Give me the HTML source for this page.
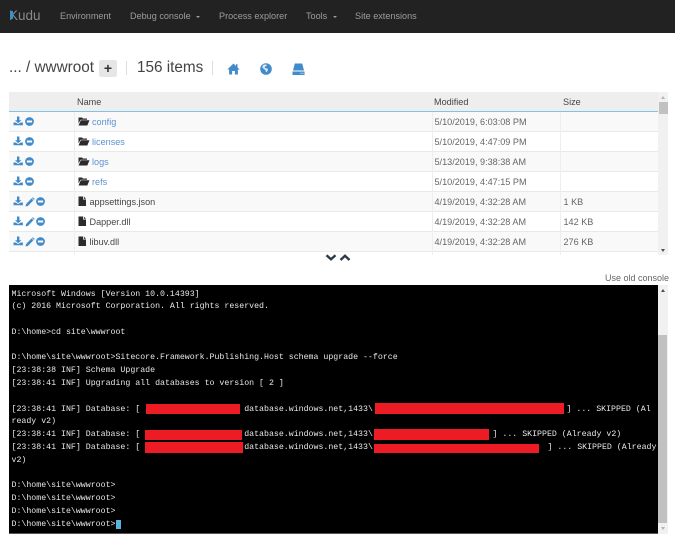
<!DOCTYPE html>
<html><head><meta charset="utf-8"><style>
*{box-sizing:border-box}
html,body{margin:0;padding:0;width:675px;height:542px;overflow:hidden;background:#fff;font-family:"Liberation Sans",sans-serif}
#w{position:absolute;left:0;top:0;width:675px;height:542px;overflow:hidden;filter:blur(.3px)}
.a{position:absolute;white-space:nowrap}
.nav{left:0;top:0;width:675px;height:33px;background:#222}
.n{top:11px;font-size:9.1px;line-height:11px;color:#9d9d9d}
.car{display:inline-block;width:0;height:0;border-left:2.5px solid transparent;border-right:2.5px solid transparent;border-top:2.5px solid #9d9d9d;margin-left:3px;vertical-align:1.5px}
.h{font-size:15.3px;line-height:18px;color:#444;top:59px}
.sep{width:1px;height:14px;background:#ddd;top:61px}
.row{left:9px;width:649px;height:20px;border-bottom:1.5px solid #e9e9e9}
.row.o{background:#f9f9f9}
.v{top:0;width:1px;height:20px;background:#eee}
.t{font-size:9.1px;line-height:12px;color:#444}
.m{color:#666}
.l{color:#5b93cf}
.c{left:11.5px;top:288.5px;font-family:"Liberation Mono",monospace;font-size:8.25px;line-height:12.8px;color:#e8e8e8;white-space:pre;font-weight:400}
.p{position:absolute}
.r{background:#ed1c24}
svg{position:absolute;display:block}
</style></head><body>
<svg width="0" height="0" style="position:absolute"><defs>
<g id="dl"><path d="M4 0.5h2.4v3.7h2L5.2 7.2 2 4.2h2z" fill="#428bca"/><path d="M0.5 6.5h2.2l2.5 1.6 2.5-1.6h2.2v2.8h-9.4z" fill="#428bca"/></g>
<g id="rm"><circle cx="4.5" cy="4.5" r="4.4" fill="#428bca"/><rect x="1.9" y="3.5" width="5.2" height="2" fill="#fff"/></g>
<g id="ed"><path d="M0.5 9.5l0.6-2.5 5.4-5.6 1.9 1.9-5.4 5.6zM7 0.9l0.8-0.7 1.9 1.9-0.8 0.8z" fill="#428bca"/></g>
<g id="fo"><path d="M0.5 0.5h3.5l1 1h4v1.200H2.500L0.500 6.500z" fill="#2b2b2b"/><path d="M2.800 3.300h8.700L9.300 8.500H0.500z" fill="#2b2b2b"/></g>
<g id="fi"><path d="M0.500 0.500h4.500v3h3v6.500h-7.500z" fill="#2b2b2b"/><path d="M5.800 0.500l2.200 2.300h-2.200z" fill="#2b2b2b"/></g>
</defs></svg>
<div id="w">
<div class="a nav"></div>
<div class="a" style="left:9px;top:8px;font-size:13.500px;line-height:16px;color:#8a8a8a;font-weight:300">Kudu</div>
<div class="a" style="left:9.500px;top:11px;width:3px;height:8px;background:#2f93d0"></div>
<div class="a n" style="left:60px">Environment</div>
<div class="a n" style="left:130px">Debug console <span class="car"></span></div>
<div class="a n" style="left:219px">Process explorer</div>
<div class="a n" style="left:306px">Tools <span class="car"></span></div>
<div class="a n" style="left:355px">Site extensions</div>

<div class="a h" style="left:9px">... / wwwroot</div>
<div class="a" style="left:99px;top:60px;width:18px;height:17px;background:#e6e6e6;border-radius:2px;color:#333;font-weight:700;font-size:14px;line-height:16px;text-align:center">+</div>
<div class="a sep" style="left:126px"></div>
<div class="a h" style="left:137px">156 items</div>
<div class="a sep" style="left:212px"></div>
<svg style="left:227px;top:63px" width="13" height="12" viewBox="0 0 13 12"><path d="M6.500 0.500L0.300 6.500h1.800V11.500h3V8h2.800v3.500h3V6.500h1.800L10.500 4.400V1.200H9v1.800z" fill="#428bca"/></svg>
<svg style="left:259.500px;top:63px" width="12" height="12" viewBox="0 0 12 12"><circle cx="6" cy="6" r="5.800" fill="#428bca"/><path d="M3.500 1.800c1.500-.6 3-.3 3.500.3-.4 1-2 1-2.200 2-.2 1 1.200 1.200 2.300 1.400 1 .3 1.200 1.200.5 2-.5.8-.6 1.500-1.400 1.700-.6-.8-.3-1.800-1.200-2.500C4.500 6 3 5.500 2.300 4.500c.2-1.200.5-2.100 1.200-2.700z" fill="#dcebf7"/></svg>
<svg style="left:292px;top:62.500px" width="13" height="13" viewBox="0 0 13 13"><path d="M2.800 0.500h7.400L12 7.500H1z" fill="#428bca"/><rect x="0.500" y="8.500" width="12" height="3.500" fill="#428bca"/><rect x="8.500" y="9.800" width="1" height="1" fill="#fff"/><rect x="10.500" y="9.800" width="1" height="1" fill="#fff"/></svg>

<div class="a" style="left:9px;top:92px;width:649px;height:20px;background:#eee;border-bottom:1.500px solid #7fc4e6"></div>
<div class="a t" style="left:77px;top:96px">Name</div>
<div class="a t" style="left:434px;top:96px">Modified</div>
<div class="a t" style="left:563px;top:96px">Size</div>

<div class="a row o" style="top:112px"></div>
<div class="a row" style="top:132px"></div>
<div class="a row o" style="top:152px"></div>
<div class="a row" style="top:172px"></div>
<div class="a row o" style="top:192px"></div>
<div class="a row" style="top:212px"></div>
<div class="a row o" style="top:232px"></div>

<div class="a v" style="left:74px;top:112px;height:143px;background:#eee"></div>
<div class="a v" style="left:431.500px;top:112px;height:143px;background:#eee"></div>
<div class="a v" style="left:560px;top:112px;height:143px;background:#eee"></div>

<svg style="left:13px;top:116px" width="10" height="10" viewBox="0 0 10 10"><use href="#dl"/></svg>
<svg style="left:25px;top:117px" width="9" height="9" viewBox="0 0 9 9"><use href="#rm"/></svg>
<svg style="left:13px;top:136px" width="10" height="10" viewBox="0 0 10 10"><use href="#dl"/></svg>
<svg style="left:25px;top:137px" width="9" height="9" viewBox="0 0 9 9"><use href="#rm"/></svg>
<svg style="left:13px;top:156px" width="10" height="10" viewBox="0 0 10 10"><use href="#dl"/></svg>
<svg style="left:25px;top:157px" width="9" height="9" viewBox="0 0 9 9"><use href="#rm"/></svg>
<svg style="left:13px;top:176px" width="10" height="10" viewBox="0 0 10 10"><use href="#dl"/></svg>
<svg style="left:25px;top:177px" width="9" height="9" viewBox="0 0 9 9"><use href="#rm"/></svg>
<svg style="left:13px;top:196px" width="10" height="10" viewBox="0 0 10 10"><use href="#dl"/></svg>
<svg style="left:24.500px;top:196.500px" width="10" height="10" viewBox="0 0 10 10"><use href="#ed"/></svg>
<svg style="left:36px;top:197px" width="9" height="9" viewBox="0 0 9 9"><use href="#rm"/></svg>
<svg style="left:13px;top:216px" width="10" height="10" viewBox="0 0 10 10"><use href="#dl"/></svg>
<svg style="left:24.500px;top:216.500px" width="10" height="10" viewBox="0 0 10 10"><use href="#ed"/></svg>
<svg style="left:36px;top:217px" width="9" height="9" viewBox="0 0 9 9"><use href="#rm"/></svg>
<svg style="left:13px;top:236px" width="10" height="10" viewBox="0 0 10 10"><use href="#dl"/></svg>
<svg style="left:24.500px;top:236.500px" width="10" height="10" viewBox="0 0 10 10"><use href="#ed"/></svg>
<svg style="left:36px;top:237px" width="9" height="9" viewBox="0 0 9 9"><use href="#rm"/></svg>

<svg style="left:77.500px;top:117px" width="12" height="9" viewBox="0 0 12 9"><use href="#fo"/></svg>
<svg style="left:77.500px;top:137px" width="12" height="9" viewBox="0 0 12 9"><use href="#fo"/></svg>
<svg style="left:77.500px;top:157px" width="12" height="9" viewBox="0 0 12 9"><use href="#fo"/></svg>
<svg style="left:77.500px;top:177px" width="12" height="9" viewBox="0 0 12 9"><use href="#fo"/></svg>
<svg style="left:78px;top:196px" width="9" height="11" viewBox="0 0 9 11"><use href="#fi"/></svg>
<svg style="left:78px;top:216px" width="9" height="11" viewBox="0 0 9 11"><use href="#fi"/></svg>
<svg style="left:78px;top:236px" width="9" height="11" viewBox="0 0 9 11"><use href="#fi"/></svg>

<div class="a t l" style="left:92px;top:116px">config</div>
<div class="a t l" style="left:92px;top:136px">licenses</div>
<div class="a t l" style="left:92px;top:156px">logs</div>
<div class="a t l" style="left:92px;top:176px">refs</div>
<div class="a t" style="left:89.500px;top:196px">appsettings.json</div>
<div class="a t" style="left:89.500px;top:216px">Dapper.dll</div>
<div class="a t" style="left:89.500px;top:236px">libuv.dll</div>

<div class="a t m" style="left:434.500px;top:116px">5/10/2019, 6:03:08 PM</div>
<div class="a t m" style="left:434.500px;top:136px">5/10/2019, 4:47:09 PM</div>
<div class="a t m" style="left:434.500px;top:156px">5/13/2019, 9:38:38 AM</div>
<div class="a t m" style="left:434.500px;top:176px">5/10/2019, 4:47:15 PM</div>
<div class="a t m" style="left:434.500px;top:196px">4/19/2019, 4:32:28 AM</div>
<div class="a t m" style="left:434.500px;top:216px">4/19/2019, 4:32:28 AM</div>
<div class="a t m" style="left:434.500px;top:236px">4/19/2019, 4:32:28 AM</div>
<div class="a t m" style="left:563.500px;top:196px">1 KB</div>
<div class="a t m" style="left:563.500px;top:216px">142 KB</div>
<div class="a t m" style="left:563.500px;top:236px">276 KB</div>

<div class="a" style="left:658px;top:92px;width:10px;height:163px;background:#f1f1f1"></div>
<div class="a" style="left:659px;top:102px;width:8.500px;height:12px;background:#c1c1c1"></div>
<div class="a" style="left:661px;top:96px;width:0;height:0;border-left:2.500px solid transparent;border-right:2.500px solid transparent;border-bottom:3px solid #b5b5b5"></div>
<div class="a" style="left:661px;top:249px;width:0;height:0;border-left:2.500px solid transparent;border-right:2.500px solid transparent;border-top:3px solid #505050"></div>

<svg style="left:325px;top:253px" width="26" height="10" viewBox="0 0 26 10"><path d="M1.500 2.200L6 6.300 10.500 2.200" fill="none" stroke="#2d3a45" stroke-width="2.400"/><path d="M15.500 7L20 2.800 24.500 7" fill="none" stroke="#2d3a45" stroke-width="2.400"/></svg>

<div class="a t m" style="right:6px;top:272px;font-size:9px">Use old console</div>

<div class="a" style="left:9px;top:285px;width:649px;height:249px;background:#000;border-bottom:1.500px solid #555"></div>
<div class="a" style="left:658px;top:285px;width:10px;height:249px;background:#f1f1f1"></div>
<div class="a" style="left:658px;top:335px;width:9px;height:188px;background:#c1c1c1"></div>
<div class="a" style="left:661px;top:289px;width:0;height:0;border-left:2.500px solid transparent;border-right:2.500px solid transparent;border-bottom:3px solid #505050"></div>
<div class="a" style="left:661px;top:527px;width:0;height:0;border-left:2.500px solid transparent;border-right:2.500px solid transparent;border-top:3px solid #b5b5b5"></div>

<div class="a c">Microsoft Windows [Version 10.0.14393]
(c) 2016 Microsoft Corporation. All rights reserved.

D:\home&gt;cd site\wwwroot

D:\home\site\wwwroot&gt;Sitecore.Framework.Publishing.Host schema upgrade --force
[23:38:38 INF] Schema Upgrade
[23:38:41 INF] Upgrading all databases to version [ 2 ]

[23:38:41 INF] Database: [                     database.windows.net,1433\<span class="p" style="left:555px">] ... SKIPPED (Al</span>
ready v2)
[23:38:41 INF] Database: [                     database.windows.net,1433\<span class="p" style="left:481px">] ... SKIPPED (Already v2)</span>
[23:38:41 INF] Database: [                     database.windows.net,1433\<span class="p" style="left:536px">] ... SKIPPED (Already</span>
v2)

D:\home\site\wwwroot&gt;
D:\home\site\wwwroot&gt;
D:\home\site\wwwroot&gt;
D:\home\site\wwwroot&gt;</div>

<div class="a r" style="left:145.500px;top:404px;width:94.500px;height:9.500px"></div>
<div class="a r" style="left:374.500px;top:403px;width:189.500px;height:10.500px"></div>
<div class="a r" style="left:144.500px;top:430px;width:97.500px;height:10px"></div>
<div class="a r" style="left:373.500px;top:429px;width:115.500px;height:11px"></div>
<div class="a r" style="left:144.500px;top:442px;width:98px;height:11px"></div>
<div class="a r" style="left:374px;top:444px;width:165px;height:9px"></div>
<div class="a" style="left:116px;top:520px;width:5px;height:9px;background:#56b4dc"></div>
</div>
</body></html>
